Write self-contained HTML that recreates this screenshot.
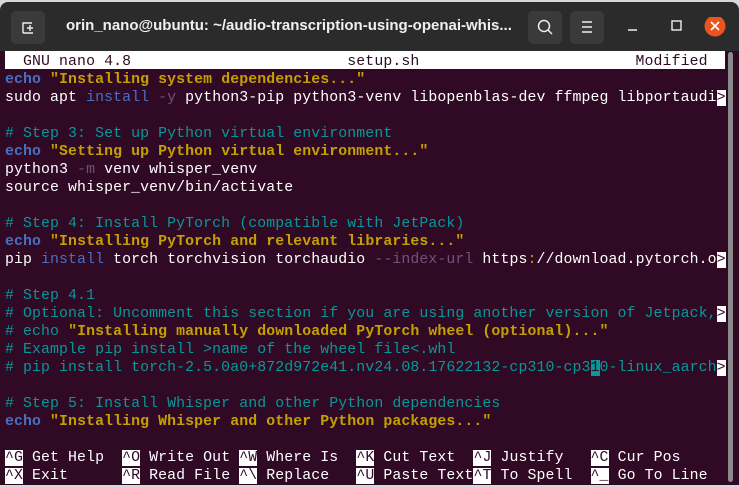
<!DOCTYPE html>
<html><head><meta charset="utf-8"><style>
*{margin:0;padding:0;box-sizing:border-box}
body{width:739px;height:485px;background:#d8d8d8;overflow:hidden;position:relative;font-family:"Liberation Mono",monospace}
#tb{position:absolute;left:0;top:2px;width:739px;height:49px;background:#2b2b2b;border-radius:8px 8px 0 0}
.btn{position:absolute;top:9px;width:34px;height:33px;background:#3a3a3a;border-radius:5px}
#title{position:absolute;left:66px;top:15px;color:#f0f0f0;font:bold 15px "Liberation Sans","DejaVu Sans",sans-serif;white-space:nowrap}
#term{position:absolute;left:0;top:51px;width:739px;height:434px;background:#300a24}
.r{position:absolute;left:5px;height:18px;line-height:22px;font-family:"Liberation Mono",monospace;font-size:14.85px;letter-spacing:0.1px;white-space:pre;color:#fff;overflow:visible}
.hd{background:#fff;color:#300a24;width:720px}
.c{color:#06989a}.e{color:#4a6fc0;font-weight:bold}.s{color:#c4a000;font-weight:bold}.o{color:#75507b}.i{color:#4a6fc0}
.k{background:#fff;color:#300a24}
#sb{position:absolute;left:728px;top:52px;width:5px;height:430px;background:#8a8a8a;border-radius:3px}
</style></head><body>
<div id="tb">
<div class="btn" style="left:11px"><svg width="34" height="33"><path d="M12 22V12h9M12 22h10M19 14v6M16 17h6" stroke="#eee" stroke-width="1.4" fill="none"/></svg></div>
<div id="title">orin_nano@ubuntu: ~/audio-transcription-using-openai-whis...</div>
<div class="btn" style="left:528px"><svg width="34" height="33"><circle cx="16" cy="15" r="5.5" stroke="#eee" stroke-width="1.5" fill="none"/><path d="M20 19l4 4" stroke="#eee" stroke-width="1.5"/></svg></div>
<div class="btn" style="left:570px"><svg width="34" height="33"><path d="M12 11h10M12 16h10M12 21h10" stroke="#eee" stroke-width="1.4"/></svg></div>
<svg style="position:absolute;left:625px;top:15px" width="110" height="25"><path d="M3 13h9" stroke="#eee" stroke-width="1.5"/><rect x="47" y="4" width="9" height="9" stroke="#eee" stroke-width="1.4" fill="none"/><circle cx="90" cy="9" r="10.5" fill="#e95420"/><path d="M86 5l8 8M94 5l-8 8" stroke="#fff" stroke-width="1.6"/></svg>
</div>
<div id="term"></div>
<div id="sb"></div>
<div class="r hd" style="top:51px">  GNU nano 4.8                        setup.sh                        Modified  </div>
<div class="r" style="top:69px"><span class="e">echo</span> <span class="s">"Installing system dependencies..."</span></div>
<div class="r" style="top:87px">sudo apt <span class="i">install</span> <span class="o">-y</span> python3-pip python3-venv libopenblas-dev ffmpeg libportaudi<span class="k">&gt;</span></div>
<div class="r c" style="top:123px"># Step 3: Set up Python virtual environment</div>
<div class="r" style="top:141px"><span class="e">echo</span> <span class="s">"Setting up Python virtual environment..."</span></div>
<div class="r" style="top:159px">python3 <span class="o">-m</span> venv whisper_venv</div>
<div class="r" style="top:177px">source whisper_venv/bin/activate</div>
<div class="r c" style="top:213px"># Step 4: Install PyTorch (compatible with JetPack)</div>
<div class="r" style="top:231px"><span class="e">echo</span> <span class="s">"Installing PyTorch and relevant libraries..."</span></div>
<div class="r" style="top:249px">pip <span class="i">install</span> torch torchvision torchaudio <span class="o">--index-url</span> https<span class="s" style="font-weight:normal">:</span>//download.pytorch.o<span class="k">&gt;</span></div>
<div class="r c" style="top:285px"># Step 4.1</div>
<div class="r c" style="top:303px"># Optional: Uncomment this section if you are using another version of Jetpack,<span class="k">&gt;</span></div>
<div class="r c" style="top:321px"># echo <span class="s">"Installing manually downloaded PyTorch wheel (optional)..."</span></div>
<div class="r c" style="top:339px"># Example pip install &gt;name of the wheel file&lt;.whl</div>
<div class="r c" style="top:357px"># pip install torch-2.5.0a0+872d972e41.nv24.08.17622132-cp310-cp3<span style="background:#06989a;color:#300a24">1</span>0-linux_aarch<span class="k">&gt;</span></div>
<div class="r c" style="top:393px"># Step 5: Install Whisper and other Python dependencies</div>
<div class="r" style="top:411px"><span class="e">echo</span> <span class="s">"Installing Whisper and other Python packages..."</span></div>
<div class="r" style="top:447px"><span class="k">^G</span> Get Help  <span class="k">^O</span> Write Out <span class="k">^W</span> Where Is  <span class="k">^K</span> Cut Text  <span class="k">^J</span> Justify   <span class="k">^C</span> Cur Pos</div>
<div class="r" style="top:465px"><span class="k">^X</span> Exit      <span class="k">^R</span> Read File <span class="k">^\</span> Replace   <span class="k">^U</span> Paste Text<span class="k">^T</span> To Spell  <span class="k">^_</span> Go To Line</div>
</body></html>
